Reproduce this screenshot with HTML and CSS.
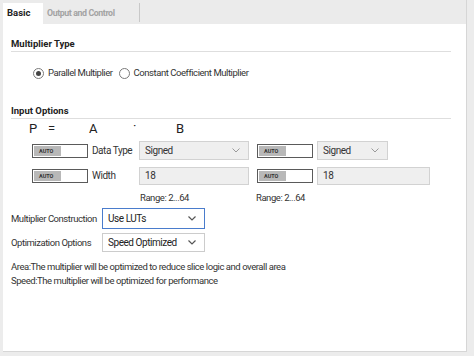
FILE: index.html
```html
<!DOCTYPE html>
<html lang="en">
<head>
  <meta charset="UTF-8" />
  <title>Multiplier Options</title>
  <link rel="stylesheet" href="styles.css">
</head>
<body>

<div class="window">
  <div class="tabs">
    <div class="tab active">Basic</div>
    <div class="tab">Output and Control</div>
    <div class="tab-sep"></div>
  </div>

  <div class="content">
    <div class="group-title">Multiplier Type</div>
    <div class="radio-row">
      <label class="radio checked"><span class="dot"></span>Parallel Multiplier</label>
      <label class="radio"><span class="dot"></span>Constant Coefficient Multiplier</label>
    </div>

    <div class="group-title input-title">Input Options</div>
    <div class="equation">
      <span class="eq-p">P</span>
      <span class="eq-eq">=</span>
      <span class="eq-a">A</span>
      <span class="eq-dot">·</span>
      <span class="eq-b">B</span>
    </div>

    <div class="operand-grid">
      <div class="auto"><span class="auto-knob">AUTO</span></div>
      <div class="op-label">Data Type</div>
      <div class="field select">Signed
        <svg class="chev" width="8" height="5" viewBox="0 0 8 5"><polyline points="0.5,0.5 4,4 7.5,0.5" fill="none" stroke="#9a9a9a" stroke-width="1"/></svg>
      </div>
      <div class="auto"><span class="auto-knob">AUTO</span></div>
      <div class="field select short">Signed
        <svg class="chev" width="8" height="5" viewBox="0 0 8 5"><polyline points="0.5,0.5 4,4 7.5,0.5" fill="none" stroke="#9a9a9a" stroke-width="1"/></svg>
      </div>

      <div class="auto"><span class="auto-knob">AUTO</span></div>
      <div class="op-label">Width</div>
      <div class="field input">18</div>
      <div class="auto"><span class="auto-knob">AUTO</span></div>
      <div class="field input wide">18</div>

      <div></div>
      <div></div>
      <div class="range">Range: 2...64</div>
      <div class="range range-b">Range: 2...64</div>
      <div></div>
    </div>

    <div class="option-row first">
      <div class="opt-label">Multiplier Construction</div>
      <div class="dropdown focused">Use LUTs
        <svg class="chev" width="8" height="5" viewBox="0 0 8 5"><polyline points="0.5,0.5 4,4 7.5,0.5" fill="none" stroke="#555" stroke-width="1.2"/></svg>
      </div>
    </div>
    <div class="option-row">
      <div class="opt-label">Optimization Options</div>
      <div class="dropdown">Speed Optimized
        <svg class="chev" width="8" height="5" viewBox="0 0 8 5"><polyline points="0.5,0.5 4,4 7.5,0.5" fill="none" stroke="#555" stroke-width="1.2"/></svg>
      </div>
    </div>

    <div class="note first">Area:The multiplier will be optimized to reduce slice logic and overall area</div>
    <div class="note">Speed:The multiplier will be optimized for performance</div>
  </div>
</div>

</body>
</html>
```

FILE: styles.css
```css
* { box-sizing: border-box; }
html, body {
  margin: 0;
  padding: 0;
  background: #ececec;
  font-family: Roboto, "Liberation Sans", Arial, sans-serif;
  font-size: 9.5px;
  letter-spacing: -0.45px;
  color: #333;
}
.window {
  margin-left: 3px;
  width: 464px;
  height: 352px;
  background: #fff;
  border-right: 1px solid #d6d6d6;
  border-bottom: 1px solid #d6d6d6;
  display: flex;
  flex-direction: column;
}
.tabs {
  height: 24px;
  background: #ebebeb;
  display: flex;
  align-items: flex-end;
}
.tab {
  height: 21px;
  padding: 0 4px;
  line-height: 20px;
  font-weight: bold;
  color: #a3a3a3;
  font-size: 8.8px;
  letter-spacing: -0.4px;
  white-space: nowrap;
}
.tab.active {
  width: 40px;
  background: #fff;
  color: #222;
  font-size: 9.5px;
  letter-spacing: 0;
}
.tab:nth-child(2) { width: 96px; }
.tab-sep {
  width: 1px;
  height: 19px;
  margin: 0 0 2px 0;
  background: #c8c8c8;
}
.content {
  padding: 0 15px 0 8px;
}
.group-title {
  margin-top: 13px;
  height: 15px;
  line-height: 14px;
  font-weight: bold;
  letter-spacing: 0;
  color: #222;
  border-bottom: 1px solid #dedede;
}
.input-title {
  margin-top: 24px;
}
.radio-row {
  margin-top: 14px;
  padding-left: 22px;
  display: flex;
  gap: 6px;
  height: 14px;
  line-height: 14px;
}
.radio {
  display: flex;
  align-items: center;
  gap: 4px;
}
.dot {
  width: 11px;
  height: 11px;
  border: 1px solid #7a7a7a;
  border-radius: 50%;
  background: #fff;
  position: relative;
}
.radio.checked .dot::after {
  content: "";
  position: absolute;
  left: 2px;
  top: 2px;
  width: 5px;
  height: 5px;
  border-radius: 50%;
  background: #444;
}
.equation {
  margin-top: 2px;
  padding-left: 18px;
  display: flex;
  height: 16px;
  line-height: 16px;
  font-size: 13px;
  letter-spacing: 0;
  color: #222;
}
.eq-p { width: 19px; }
.eq-eq { width: 41px; }
.eq-a { width: 44px; }
.eq-dot { width: 43px; line-height: 10px; }
.operand-grid {
  margin-top: 4px;
  padding-left: 21px;
  display: grid;
  grid-template-columns: 56px 51px 118px 60px 113px;
  grid-template-rows: 19px 19px 12px;
  row-gap: 6px;
  align-items: center;
}
.auto {
  width: 56px;
  height: 14px;
  border: 1px solid #5a5a5a;
  background: #fff;
  padding: 1px;
  display: flex;
}
.auto-knob {
  width: 27px;
  background: #b8b8b8;
  font-size: 5.5px;
  font-weight: bold;
  letter-spacing: 0;
  line-height: 10px;
  padding-left: 5px;
  color: #333;
}
.op-label {
  padding-left: 4px;
  font-size: 10px;
  white-space: nowrap;
}
.field {
  width: 110px;
  height: 19px;
  background: #efefef;
  border: 1px solid #d2d2d2;
  padding-left: 5px;
  font-size: 10px;
  display: flex;
  align-items: center;
  justify-content: space-between;
}
.field.input {
  height: 18px;
}
.field.wide { width: 113px; }
.field.short { width: 71px; }
.chev { margin-right: 8px; }
.range {
  padding-left: 1px;
  white-space: nowrap;
}
.range-b { margin-left: -2px; }
.option-row {
  display: flex;
  align-items: center;
  margin-top: 4px;
}
.option-row.first { margin-top: 5px; }
.opt-label {
  width: 91px;
  white-space: nowrap;
}
.dropdown {
  width: 103px;
  height: 19px;
  border: 1px solid #ccc;
  background: #fff;
  padding-left: 5px;
  font-size: 10px;
  color: #222;
  display: flex;
  align-items: center;
  justify-content: space-between;
}
.dropdown.focused {
  height: 21px;
  border-color: #4a7ccc;
}
.dropdown .chev { margin-right: 8px; }
.note {
  line-height: 14px;
}
.note.first { margin-top: 8px; }
```
